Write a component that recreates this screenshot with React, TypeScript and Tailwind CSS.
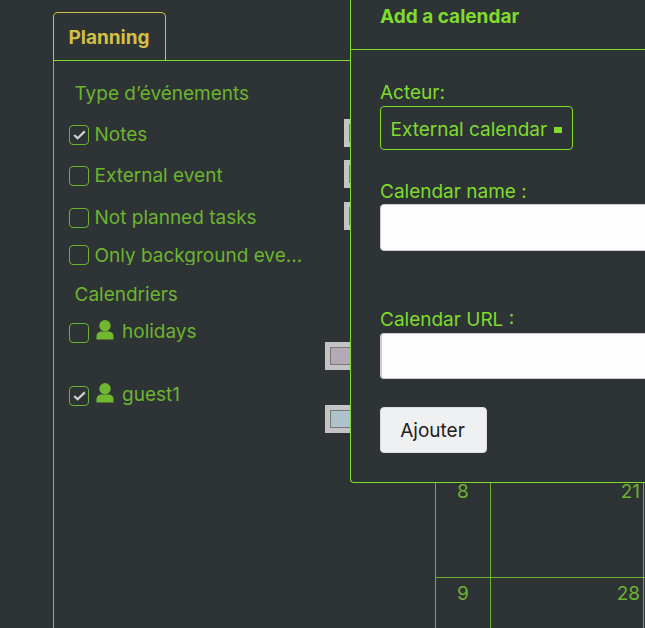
import React from "react";

const font = { fontFamily: "Inter, 'Liberation Sans', sans-serif" };

function Check({ checked }: { checked?: boolean }) {
  return (
    <span className="w-5 h-5 shrink-0 rounded-[4px] border border-[#6cb32f] flex items-center justify-center">
      {checked && (
        <svg width="13" height="10" viewBox="0 0 13 10">
          <path d="M1.2 5 L4.6 8.2 L11.8 1.4" fill="none" stroke="#d0d2d4" strokeWidth="2.2" />
        </svg>
      )}
    </span>
  );
}

function Person() {
  return (
    <svg width="18" height="20" viewBox="0 0 18 20" className="block shrink-0">
      <circle cx="9" cy="5.8" r="5.7" fill="#70b830" />
      <path d="M0.5 19.5 V16 C0.5 13 3 11.5 5.5 11.5 H12.5 C15 11.5 17.5 13 17.5 16 V19.5 Z" fill="#70b830" />
    </svg>
  );
}

function TypeRow({ label, checked, swatch, className }: { label: string; checked?: boolean; swatch?: boolean; className: string }) {
  return (
    <div className={`flex items-center pl-[15px] ${className}`}>
      <Check checked={checked} />
      <span className="ml-[5.5px] text-[19px] leading-[22px] whitespace-nowrap">{label}</span>
      {swatch && (
        <span className="ml-auto w-[6px] h-[28px] bg-[#c4c4c4] pl-[5px] py-[5px] -translate-y-[2px]">
          <span className="block w-full h-full bg-[#777]" />
        </span>
      )}
    </div>
  );
}

function CalendarRow({ label, checked, color }: { label: string; checked?: boolean; color: string }) {
  return (
    <div className="h-[63px]">
      <div className="flex items-center pl-[15px] h-[20px]">
        <Check checked={checked} />
        <span className="ml-[7px] pb-[6px]"><Person /></span>
        <span className="ml-[8px] pb-[2px] text-[19px] leading-[22px]">{label}</span>
      </div>
      <div className="flex justify-end -mt-px">
        <span className="w-[25px] h-[28px] bg-[#c4c4c4] pl-[5px] py-[5px]">
          <span className={`block h-full border border-r-0 border-[#777] ${color}`} />
        </span>
      </div>
    </div>
  );
}

export default function App() {
  return (
    <div style={font} className="relative w-[645px] h-[628px] overflow-hidden bg-[#2e3336] flex text-[#6cb32f]">
      {/* Planning panel */}
      <div className="ml-[53px] w-[297px] shrink-0 flex flex-col">
        <div className="h-[61px] pt-3 flex border-b border-[#7fdb2c]">
          <div className="w-[113px] h-[49px] border border-b-0 border-[#d4bf45] rounded-t-[5px] flex items-center justify-center pt-[2px] pr-[1px] text-[#d4bf45] font-bold text-[19px] -mb-px">
            Planning
          </div>
        </div>
        <div className="flex-1 border-l border-[#8fa889] overflow-hidden">
          <div className="pl-[20.5px] pt-[22px] text-[19px] leading-[22px]">Type d’événements</div>
          <TypeRow label="Notes" checked swatch className="mt-[19px] h-[22px]" />
          <TypeRow label="External event" swatch className="mt-[19px] h-[22px]" />
          <TypeRow label="Not planned tasks" swatch className="mt-[20px] h-[22px]" />
          <div className="mt-[16px] h-[20px] pl-[15px] flex items-center overflow-hidden">
            <Check />
            <span className="ml-[5.5px] pt-[2px] text-[19px] leading-[22px] whitespace-nowrap">Only background eve...</span>
          </div>
          <div className="pl-[20.5px] mt-[19px] text-[19px] leading-[22px]">Calendriers</div>
          <div className="mt-[17px]">
            <CalendarRow label="holidays" color="bg-[#b5a9b8]" />
            <CalendarRow label="guest1" checked color="bg-[#aec2cc]" />
          </div>
        </div>
      </div>

      {/* Calendar behind the dialog */}
      <div className="flex-1 pl-[85px] pt-[476px]">
        <div className="grid grid-cols-[55px_153px_1fr] auto-rows-[102px] border-l border-[#6cb32f] text-[19px] leading-[22px]">
          <div className="pt-[5px] text-center border-r border-b border-[#6cb32f]">8</div>
          <div className="pt-[5px] pr-[3px] text-right border-r border-b border-[#6cb32f]">21</div>
          <div className="border-b border-[#6cb32f]" />
          <div className="pt-[5px] text-center border-r border-[#6cb32f]">9</div>
          <div className="pt-[5px] pr-[3px] text-right border-r border-[#6cb32f]">28</div>
          <div />
        </div>
      </div>

      {/* Add a calendar dialog */}
      <div className="absolute left-[350px] top-[-1px] w-[320px] h-[484px] bg-[#2e3336] border border-r-0 border-[#7fdb2c] rounded-bl-[4px] text-[#7fdb2c] text-[19px] leading-[22px]">
        <div className="h-[50px] border-b border-[#7fdb2c] pl-[29px] pt-[6px] font-bold">Add a calendar</div>
        <div className="pl-[29px] pt-[32px] flex flex-col items-start">
          <label>Acteur:</label>
          <div className="mt-[2px] w-[193px] h-[44px] border border-[#7fdb2c] rounded-[4px] flex items-center pl-[9.5px] pt-[3px] whitespace-nowrap">
            External calendar
            <span className="ml-[7px] w-[8px] h-[6px] bg-[#7fdb2c] mt-[1px]" />
          </div>
          <label className="mt-[31px]">Calendar name :</label>
          <input className="mt-[1px] w-full h-[47px] rounded-[4px] bg-[#fdfdfd] border border-[#ccc]" />
          <label className="mt-[58px]">Calendar URL :</label>
          <input className="mt-[2px] w-full h-[46px] rounded-[4px] bg-[#fdfdfd] border border-[#ccc] border-l-[2px]" />
          <button className="mt-[28px] w-[107px] h-[46px] pt-[2px] pr-[2px] rounded-[4px] bg-[#eff0f2] border border-[#dcdcdc] text-[#1e2022]">Ajouter</button>
        </div>
      </div>
    </div>
  );
}
